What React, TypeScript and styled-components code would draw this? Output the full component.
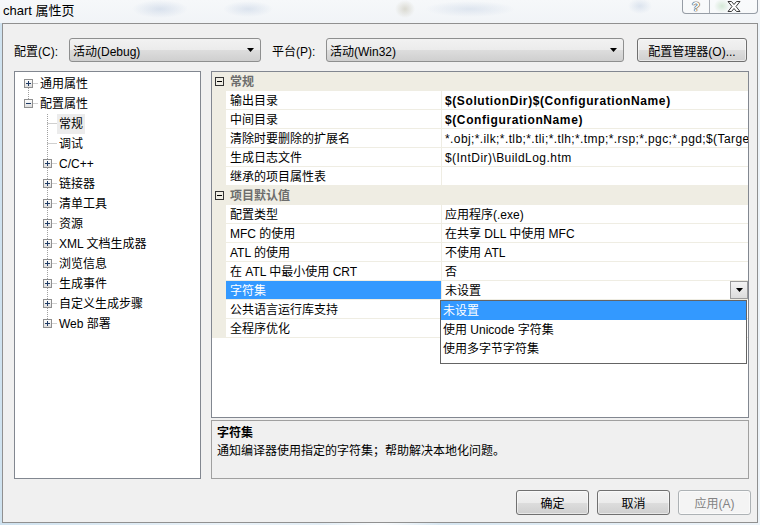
import React from 'react';
import styled, { createGlobalStyle } from 'styled-components';

const BEIGE = '#EFEDE3';
const BLUE = '#3399FF';

const GlobalStyle = createGlobalStyle`
  html, body { margin: 0; padding: 0; width: 760px; height: 525px; overflow: hidden; }
  body {
    font-family: "Liberation Sans", "Noto Sans CJK SC", sans-serif;
    font-size: 12px;
    color: #000;
    background: #dde9f2;
  }
  * { box-sizing: border-box; }
`;

const Window = styled.div`
  width: 760px;
  height: 525px;
  display: flex;
  flex-direction: column;
  background:
    radial-gradient(ellipse 60px 6px at 380px 524px, rgba(255,255,255,0.9), transparent),
    linear-gradient(90deg, #cfe2ef, #eaf2f8 30%, #d6e6f1 60%, #eef4f9);
`;

const TitleBar = styled.div`
  height: 23px;
  flex-shrink: 0;
  display: flex;
  align-items: flex-start;
  background:
    radial-gradient(ellipse 28px 9px at 160px 9px, rgba(120,150,195,0.22), transparent),
    radial-gradient(ellipse 25px 8px at 248px 9px, rgba(120,150,195,0.2), transparent),
    radial-gradient(ellipse 10px 9px at 405px 9px, rgba(140,130,90,0.25), transparent),
    radial-gradient(ellipse 45px 8px at 470px 9px, rgba(120,150,195,0.18), transparent),
    radial-gradient(ellipse 12px 8px at 640px 6px, rgba(120,150,195,0.2), transparent),
    radial-gradient(ellipse 8px 7px at 722px 6px, rgba(90,170,90,0.35), transparent),
    linear-gradient(#f6f8fa, #f1f4f7);
`;

const Title = styled.div`
  padding-left: 3px;
  line-height: 21px;
  font-size: 13px;
  color: #000;
`;

const CaptionGroup = styled.div`
  margin-left: auto;
  margin-right: 2px;
  height: 14px;
  display: flex;
  border: 1px solid rgba(70, 80, 95, 0.55);
  border-top: none;
  border-radius: 0 0 4px 4px;
  background: rgba(255, 255, 255, 0.35);
`;

const CaptionButton = styled.div<{ $w: number; $divider?: boolean }>`
  width: ${(p) => p.$w}px;
  height: 13px;
  display: flex;
  align-items: center;
  justify-content: center;
  border-right: ${(p) => (p.$divider ? '1px solid rgba(70,80,95,0.45)' : 'none')};
  font-family: "Liberation Sans", sans-serif;
  font-weight: bold;
  font-size: 13px;
  line-height: 13px;
  color: #ffffff;
  text-shadow: 0 0 1px #333, 0 0 1px #333, 0 0 1px #333;
`;

const Client = styled.div`
  margin-left: 2px;
  width: 756px;
  height: 500px;
  flex-shrink: 0;
  border: 1px solid #909090;
  background: #f0f0f0;
  display: flex;
  flex-direction: column;
`;

const ConfigRow = styled.div`
  display: flex;
  align-items: center;
  margin-top: 14px;
  height: 24px;
  padding-left: 11px;
`;

const FieldLabel = styled.div<{ $w: number; $ml?: number }>`
  width: ${(p) => p.$w}px;
  margin-left: ${(p) => p.$ml ?? 0}px;
  flex-shrink: 0;
  white-space: nowrap;
`;

const Combo = styled.div<{ $w: number }>`
  width: ${(p) => p.$w}px;
  height: 24px;
  flex-shrink: 0;
  border: 1px solid #8e8f8f;
  border-radius: 3px;
  background: linear-gradient(#f2f2f2 0%, #ebebeb 50%, #dddddd 51%, #cfcfcf 100%);
  display: flex;
  align-items: center;
  justify-content: space-between;
  padding: 0 6px 0 3px;
  white-space: nowrap;
`;

const PushButton = styled.div<{ $w: number; $ml?: number; $disabled?: boolean }>`
  width: ${(p) => p.$w}px;
  margin-left: ${(p) => p.$ml ?? 0}px;
  height: ${(p) => (p.$ml !== undefined ? 24 : 25)}px;
  flex-shrink: 0;
  border: 1px solid ${(p) => (p.$disabled ? '#adb2b5' : '#707070')};
  border-radius: 3px;
  background: ${(p) =>
    p.$disabled
      ? '#f4f4f4'
      : 'linear-gradient(#f2f2f2 0%, #ebebeb 50%, #dddddd 51%, #cfcfcf 100%)'};
  color: ${(p) => (p.$disabled ? '#838383' : '#000')};
  display: flex;
  align-items: center;
  justify-content: center;
  white-space: nowrap;
  box-shadow: inset 0 0 0 1px rgba(255, 255, 255, 0.5);
`;

const Main = styled.div`
  display: flex;
  margin-top: 9px;
  padding-left: 11px;
  gap: 10px;
  height: 408px;
`;

const Tree = styled.div`
  width: 187px;
  height: 408px;
  border: 1px solid #828790;
  background: #fff;
  padding-top: 2px;
  display: flex;
  flex-direction: column;
`;

const TreeRow = styled.div`
  height: 20px;
  display: flex;
  align-items: center;
  white-space: nowrap;
`;

const TreeLabel = styled.span<{ $selected?: boolean }>`
  height: 20px;
  line-height: 20px;
  padding: 0 2px;
  margin-left: -2px;
  background: ${(p) => (p.$selected ? '#ececec' : 'transparent')};
`;

const RightCol = styled.div`
  width: 538px;
  display: flex;
  flex-direction: column;
  gap: 2px;
`;

const Grid = styled.div`
  position: relative;
  height: 347px;
  border: 1px solid #828790;
  background: #fff;
  display: flex;
  flex-direction: column;
`;

const GridRow = styled.div<{ $cat?: boolean }>`
  height: 19px;
  flex-shrink: 0;
  display: flex;
  background: ${(p) => (p.$cat ? BEIGE : '#fff')};
`;

const Gutter = styled.div`
  width: 14px;
  flex-shrink: 0;
  background: ${BEIGE};
  display: flex;
  align-items: center;
  padding-left: 3px;
`;

const CatLabel = styled.div`
  padding: 1px 0 0 4px;
  line-height: 18px;
  color: #6d6d6d;
  font-weight: bold;
`;

const NameCell = styled.div<{ $selected?: boolean }>`
  width: 216px;
  flex-shrink: 0;
  border-right: 1px solid ${BEIGE};
  border-bottom: 1px solid ${BEIGE};
  padding: 1px 0 0 4px;
  line-height: 18px;
  white-space: nowrap;
  overflow: hidden;
  background: ${(p) => (p.$selected ? BLUE : '#fff')};
  color: ${(p) => (p.$selected ? '#fff' : '#000')};
`;

const ValueCell = styled.div<{ $bold?: boolean; $track?: number }>`
  position: relative;
  flex: 1;
  min-width: 0;
  border-bottom: 1px solid ${BEIGE};
  padding: 1px 0 0 3px;
  line-height: 18px;
  white-space: nowrap;
  overflow: hidden;
  letter-spacing: ${(p) => p.$track ?? 0}px;
  font-weight: ${(p) => (p.$bold ? 'bold' : 'normal')};
`;

const CellDropButton = styled.div`
  position: absolute;
  right: 0;
  top: 0;
  width: 18px;
  height: 18px;
  border: 1px solid #9a9a9a;
  background: linear-gradient(#f4f4f4, #dcdcdc);
  display: flex;
  align-items: center;
  justify-content: center;
`;

const DropList = styled.div`
  position: absolute;
  left: 228px;
  top: 228px;
  width: 307px;
  height: 64px;
  border: 1px solid #646464;
  background: #fff;
  display: flex;
  flex-direction: column;
`;

const DropItem = styled.div<{ $selected?: boolean }>`
  height: 19px;
  overflow: hidden;
  padding: 1px 0 0 2px;
  line-height: 18px;
  white-space: nowrap;
  background: ${(p) => (p.$selected ? BLUE : '#fff')};
  color: ${(p) => (p.$selected ? '#fff' : '#000')};
`;

const Desc = styled.div`
  height: 59px;
  border: 1px solid #a0a0a0;
  background: #f0f0f0;
  padding: 3px 0 0 5px;
  line-height: 18px;
`;

const DescTitle = styled.div`
  font-weight: bold;
`;

const Footer = styled.div`
  display: flex;
  justify-content: flex-end;
  gap: 8px;
  margin-top: 11px;
  padding-right: 6px;
`;

const DownArrow = ({ color = '#000' }: { color?: string }) => (
  <svg width="7" height="4" viewBox="0 0 7 4">
    <polygon points="0,0 7,0 3.5,4" fill={color} />
  </svg>
);

const CloseGlyph = () => (
  <svg width="14" height="11" viewBox="0 0 14 11">
    <polygon
      points="1,0.5 4.5,0.5 7,3.5 9.5,0.5 13,0.5 9,5.5 13,10.5 9.5,10.5 7,7.5 4.5,10.5 1,10.5 5,5.5"
      fill="#fff"
      stroke="#3a3a3a"
      strokeWidth="1"
      strokeLinejoin="round"
    />
  </svg>
);

const CatBox = () => (
  <svg width="9" height="9" viewBox="0 0 9 9">
    <rect x="0.5" y="0.5" width="8" height="8" fill="none" stroke="#333" />
    <line x1="2" y1="4.5" x2="7" y2="4.5" stroke="#000" />
  </svg>
);

type TreeItem = {
  label: string;
  level: 0 | 1;
  expander?: 'plus' | 'minus';
  line: 'first' | 'mid' | 'last';
  selected?: boolean;
};

const treeItems: TreeItem[] = [
  { label: '通用属性', level: 0, expander: 'plus', line: 'first' },
  { label: '配置属性', level: 0, expander: 'minus', line: 'last' },
  { label: '常规', level: 1, line: 'mid', selected: true },
  { label: '调试', level: 1, line: 'mid' },
  { label: 'C/C++', level: 1, expander: 'plus', line: 'mid' },
  { label: '链接器', level: 1, expander: 'plus', line: 'mid' },
  { label: '清单工具', level: 1, expander: 'plus', line: 'mid' },
  { label: '资源', level: 1, expander: 'plus', line: 'mid' },
  { label: 'XML 文档生成器', level: 1, expander: 'plus', line: 'mid' },
  { label: '浏览信息', level: 1, expander: 'plus', line: 'mid' },
  { label: '生成事件', level: 1, expander: 'plus', line: 'mid' },
  { label: '自定义生成步骤', level: 1, expander: 'plus', line: 'mid' },
  { label: 'Web 部署', level: 1, expander: 'plus', line: 'last' },
];

const TreeGlyph = ({ item }: { item: TreeItem }) => {
  const cx = item.level === 0 ? 13.5 : 32.5;
  const width = item.level === 0 ? 25 : 44;
  const dot = { stroke: '#a0a0a0', strokeDasharray: '1 1', strokeWidth: 1 };
  const y1 = item.line === 'first' ? 10 : 0;
  const y2 = item.line === 'last' ? 10 : 20;
  return (
    <svg width={width} height="20" viewBox={`0 0 ${width} 20`} style={{ flexShrink: 0 }}>
      <defs>
        <linearGradient id="boxg" x1="0" y1="0" x2="0" y2="1">
          <stop offset="0" stopColor="#ffffff" />
          <stop offset="1" stopColor="#dcdcdc" />
        </linearGradient>
      </defs>
      <line x1={cx} y1={y1} x2={cx} y2={y2} {...dot} />
      <line x1={cx} y1="9.5" x2={width - 2} y2="9.5" {...dot} />
      {item.expander && (
        <g>
          <rect x={cx - 4} y="5.5" width="8" height="8" fill="url(#boxg)" stroke="#8f8f8f" />
          <line x1={cx - 2.5} y1="9.5" x2={cx + 2.5} y2="9.5" stroke="#1e3a64" />
          {item.expander === 'plus' && (
            <line x1={cx} y1="7" x2={cx} y2="12" stroke="#1e3a64" />
          )}
        </g>
      )}
    </svg>
  );
};

type Row =
  | { kind: 'cat'; label: string }
  | {
      kind: 'prop';
      name: string;
      value: string;
      bold?: boolean;
      selected?: boolean;
      track?: number;
    };

const rows: Row[] = [
  { kind: 'cat', label: '常规' },
  {
    kind: 'prop',
    name: '输出目录',
    value: '$(SolutionDir)$(ConfigurationName)',
    bold: true,
    track: 0.6,
  },
  { kind: 'prop', name: '中间目录', value: '$(ConfigurationName)', bold: true, track: 0.6 },
  {
    kind: 'prop',
    name: '清除时要删除的扩展名',
    value: '*.obj;*.ilk;*.tlb;*.tli;*.tlh;*.tmp;*.rsp;*.pgc;*.pgd;$(Targe',
    track: 0.4,
  },
  { kind: 'prop', name: '生成日志文件', value: '$(IntDir)\\BuildLog.htm', track: 0.45 },
  { kind: 'prop', name: '继承的项目属性表', value: '' },
  { kind: 'cat', label: '项目默认值' },
  { kind: 'prop', name: '配置类型', value: '应用程序(.exe)' },
  { kind: 'prop', name: 'MFC 的使用', value: '在共享 DLL 中使用 MFC' },
  { kind: 'prop', name: 'ATL 的使用', value: '不使用 ATL' },
  { kind: 'prop', name: '在 ATL 中最小使用 CRT', value: '否' },
  { kind: 'prop', name: '字符集', value: '未设置', selected: true },
  { kind: 'prop', name: '公共语言运行库支持', value: '' },
  { kind: 'prop', name: '全程序优化', value: '' },
];

const dropItems = ['未设置', '使用 Unicode 字符集', '使用多字节字符集'];

export default function App() {
  return (
    <>
      <GlobalStyle />
      <Window>
        <TitleBar>
          <Title>chart 属性页</Title>
          <CaptionGroup>
            <CaptionButton $w={27} $divider>?</CaptionButton>
            <CaptionButton $w={47}>
              <CloseGlyph />
            </CaptionButton>
          </CaptionGroup>
        </TitleBar>
        <Client>
          <ConfigRow>
            <FieldLabel $w={55}>配置(C):</FieldLabel>
            <Combo $w={192}>
              <span>活动(Debug)</span>
              <DownArrow />
            </Combo>
            <FieldLabel $w={54} $ml={11}>平台(P):</FieldLabel>
            <Combo $w={298}>
              <span>活动(Win32)</span>
              <DownArrow />
            </Combo>
            <PushButton $w={110} $ml={13}>配置管理器(O)...</PushButton>
          </ConfigRow>
          <Main>
            <Tree>
              {treeItems.map((item) => (
                <TreeRow key={item.label}>
                  <TreeGlyph item={item} />
                  <TreeLabel $selected={item.selected}>{item.label}</TreeLabel>
                </TreeRow>
              ))}
            </Tree>
            <RightCol>
              <Grid>
                {rows.map((row, i) =>
                  row.kind === 'cat' ? (
                    <GridRow key={i} $cat>
                      <Gutter>
                        <CatBox />
                      </Gutter>
                      <CatLabel>{row.label}</CatLabel>
                    </GridRow>
                  ) : (
                    <GridRow key={i}>
                      <Gutter />
                      <NameCell $selected={row.selected}>{row.name}</NameCell>
                      <ValueCell $bold={row.bold} $track={row.track}>
                        {row.value}
                        {row.selected && (
                          <CellDropButton>
                            <DownArrow />
                          </CellDropButton>
                        )}
                      </ValueCell>
                    </GridRow>
                  )
                )}
                <DropList>
                  {dropItems.map((d, i) => (
                    <DropItem key={d} $selected={i === 0}>
                      {d}
                    </DropItem>
                  ))}
                </DropList>
              </Grid>
              <Desc>
                <DescTitle>字符集</DescTitle>
                <div>通知编译器使用指定的字符集；帮助解决本地化问题。</div>
              </Desc>
            </RightCol>
          </Main>
          <Footer>
            <PushButton $w={73}>确定</PushButton>
            <PushButton $w={73}>取消</PushButton>
            <PushButton $w={73} $disabled>
              应用(A)
            </PushButton>
          </Footer>
        </Client>
      </Window>
    </>
  );
}
